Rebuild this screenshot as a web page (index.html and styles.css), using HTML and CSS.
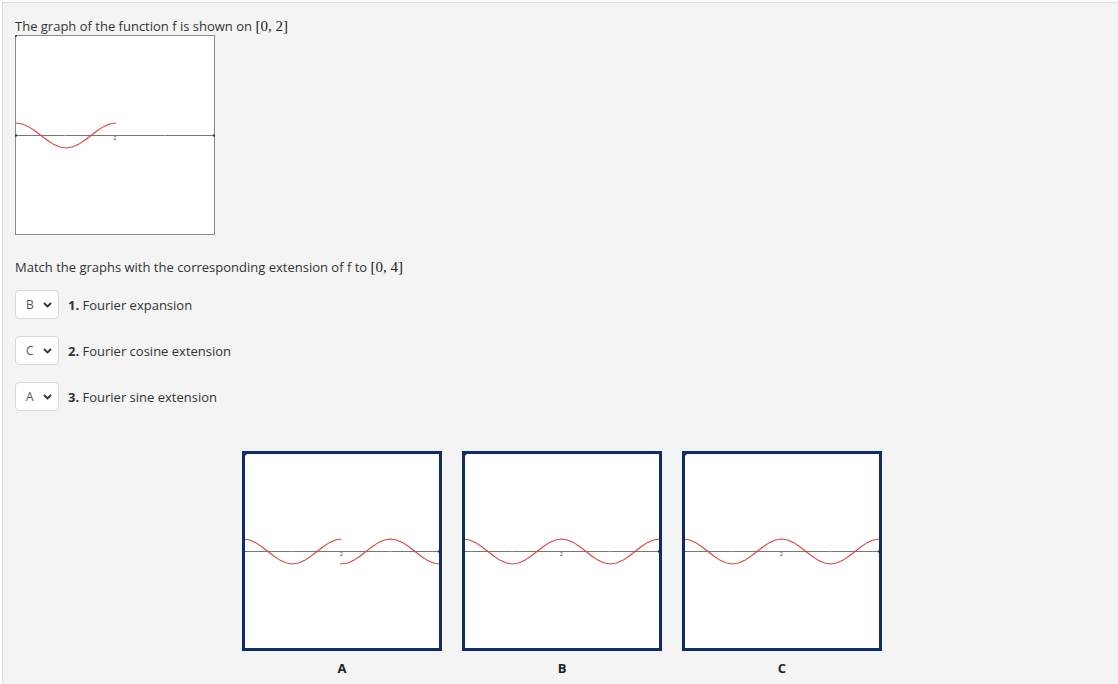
FILE: index.html
```html
<!DOCTYPE html>
<html>
<head>
<meta charset="utf-8">
<link rel="stylesheet" href="styles.css">
</head>
<body>
<div class="panel">
  <p class="line title">The graph of the function f is shown on <span class="math">[0, 2]</span></p>
  <div class="plot1">
    <svg width="200" height="200" viewBox="0 0 200 200">
      <rect x="0.5" y="0.5" width="199" height="199" fill="#fff" stroke="#8a8a8a" stroke-width="1"/>
      <line x1="0" y1="100.5" x2="200" y2="100.5" stroke="#777" stroke-width="1"/>
      <circle cx="1" cy="100.5" r="1.2" fill="#333"/>
      <circle cx="199" cy="100.5" r="1.2" fill="#333"/>
      <circle cx="1" cy="1" r="1" fill="#333"/>
      <circle cx="50" cy="100.5" r="0.7" fill="#aaa"/>
      <circle cx="150" cy="100.5" r="0.7" fill="#aaa"/>
      <text x="100" y="105" font-size="5" fill="#444" text-anchor="middle" font-family="Liberation Sans, sans-serif">2</text>
      <polyline fill="none" stroke="#d9453f" stroke-width="1.1" transform="translate(1,100.5) scale(50,-12.5)" vector-effect="non-scaling-stroke"
        points="0,1 .125,.924 .25,.707 .375,.383 .5,0 .625,-.383 .75,-.707 .875,-.924 1,-1 1.125,-.924 1.25,-.707 1.375,-.383 1.5,0 1.625,.383 1.75,.707 1.875,.924 2,1"/>
    </svg>
  </div>

  <p class="line match">Match the graphs with the corresponding extension of f to <span class="math">[0, 4]</span></p>

  <div class="rows">
    <div class="row">
      <div class="select"><span class="sel-val">B</span><svg class="chev" width="9" height="6" viewBox="0 0 9 6"><path d="M1 1 L4.5 4.5 L8 1" fill="none" stroke="#333" stroke-width="1.8"/></svg></div>
      <span class="label"><b>1.</b> Fourier expansion</span>
    </div>
    <div class="row">
      <div class="select"><span class="sel-val">C</span><svg class="chev" width="9" height="6" viewBox="0 0 9 6"><path d="M1 1 L4.5 4.5 L8 1" fill="none" stroke="#333" stroke-width="1.8"/></svg></div>
      <span class="label"><b>2.</b> Fourier cosine extension</span>
    </div>
    <div class="row">
      <div class="select"><span class="sel-val">A</span><svg class="chev" width="9" height="6" viewBox="0 0 9 6"><path d="M1 1 L4.5 4.5 L8 1" fill="none" stroke="#333" stroke-width="1.8"/></svg></div>
      <span class="label"><b>3.</b> Fourier sine extension</span>
    </div>
  </div>

  <div class="choices">
    <div class="choice">
      <svg class="card" width="200" height="200" viewBox="0 0 200 200">
        <rect x="0" y="0" width="200" height="200" fill="#fff"/>
        <line x1="0" y1="100.5" x2="200" y2="100.5" stroke="#777" stroke-width="1"/>
        <circle cx="2" cy="100.5" r="1.2" fill="#333"/>
        <circle cx="197" cy="100.5" r="1.2" fill="#333"/>
        <circle cx="50" cy="100.5" r="0.7" fill="#aaa"/>
        <circle cx="148" cy="100.5" r="0.7" fill="#aaa"/>
        <text x="99.5" y="105" font-size="5" fill="#444" text-anchor="middle" font-family="Liberation Sans, sans-serif">2</text>
        <polyline fill="none" stroke="#d9453f" stroke-width="1.1" transform="translate(1.5,100.5) scale(49,-12.5)" vector-effect="non-scaling-stroke"
          points="0,1 .125,.924 .25,.707 .375,.383 .5,0 .625,-.383 .75,-.707 .875,-.924 1,-1 1.125,-.924 1.25,-.707 1.375,-.383 1.5,0 1.625,.383 1.75,.707 1.875,.924 2,1"/>
        <polyline fill="none" stroke="#d9453f" stroke-width="1.1" transform="translate(1.5,100.5) scale(49,-12.5)" vector-effect="non-scaling-stroke"
          points="1.97,-1 2.125,-.924 2.25,-.707 2.375,-.383 2.5,0 2.625,.383 2.75,.707 2.875,.924 3,1 3.125,.924 3.25,.707 3.375,.383 3.5,0 3.625,-.383 3.75,-.707 3.875,-.924 4,-1"/>
        <rect x="1.5" y="1.5" width="197" height="197" fill="none" stroke="#102c68" stroke-width="3"/>
        <circle cx="3.5" cy="3.5" r="1" fill="#333"/>
      </svg>
      <div class="cap">A</div>
    </div>
    <div class="choice">
      <svg class="card" width="200" height="200" viewBox="0 0 200 200">
        <rect x="0" y="0" width="200" height="200" fill="#fff"/>
        <line x1="0" y1="100.5" x2="200" y2="100.5" stroke="#777" stroke-width="1"/>
        <circle cx="2" cy="100.5" r="1.2" fill="#333"/>
        <circle cx="197" cy="100.5" r="1.2" fill="#333"/>
        <circle cx="50" cy="100.5" r="0.7" fill="#aaa"/>
        <circle cx="148" cy="100.5" r="0.7" fill="#aaa"/>
        <text x="99.5" y="105" font-size="5" fill="#444" text-anchor="middle" font-family="Liberation Sans, sans-serif">2</text>
        <polyline fill="none" stroke="#d9453f" stroke-width="1.1" transform="translate(1.5,100.5) scale(49,-12.5)" vector-effect="non-scaling-stroke"
          points="0,1 .125,.924 .25,.707 .375,.383 .5,0 .625,-.383 .75,-.707 .875,-.924 1,-1 1.125,-.924 1.25,-.707 1.375,-.383 1.5,0 1.625,.383 1.75,.707 1.875,.924 2,1 2.125,.924 2.25,.707 2.375,.383 2.5,0 2.625,-.383 2.75,-.707 2.875,-.924 3,-1 3.125,-.924 3.25,-.707 3.375,-.383 3.5,0 3.625,.383 3.75,.707 3.875,.924 4,1"/>
        <rect x="1.5" y="1.5" width="197" height="197" fill="none" stroke="#102c68" stroke-width="3"/>
        <circle cx="3.5" cy="3.5" r="1" fill="#333"/>
      </svg>
      <div class="cap">B</div>
    </div>
    <div class="choice">
      <svg class="card" width="200" height="200" viewBox="0 0 200 200">
        <rect x="0" y="0" width="200" height="200" fill="#fff"/>
        <line x1="0" y1="100.5" x2="200" y2="100.5" stroke="#777" stroke-width="1"/>
        <circle cx="2" cy="100.5" r="1.2" fill="#333"/>
        <circle cx="197" cy="100.5" r="1.2" fill="#333"/>
        <circle cx="50" cy="100.5" r="0.7" fill="#aaa"/>
        <circle cx="148" cy="100.5" r="0.7" fill="#aaa"/>
        <text x="99.5" y="105" font-size="5" fill="#444" text-anchor="middle" font-family="Liberation Sans, sans-serif">2</text>
        <polyline fill="none" stroke="#d9453f" stroke-width="1.1" transform="translate(1.5,100.5) scale(49,-12.5)" vector-effect="non-scaling-stroke"
          points="0,1 .125,.924 .25,.707 .375,.383 .5,0 .625,-.383 .75,-.707 .875,-.924 1,-1 1.125,-.924 1.25,-.707 1.375,-.383 1.5,0 1.625,.383 1.75,.707 1.875,.924 2,1 2.125,.924 2.25,.707 2.375,.383 2.5,0 2.625,-.383 2.75,-.707 2.875,-.924 3,-1 3.125,-.924 3.25,-.707 3.375,-.383 3.5,0 3.625,.383 3.75,.707 3.875,.924 4,1"/>
        <rect x="1.5" y="1.5" width="197" height="197" fill="none" stroke="#102c68" stroke-width="3"/>
        <circle cx="3.5" cy="3.5" r="1" fill="#333"/>
      </svg>
      <div class="cap">C</div>
    </div>
  </div>
</div>
</body>
</html>
```

FILE: styles.css
```css
html, body {
  margin: 0;
  padding: 0;
  background: #ffffff;
  overflow: hidden;
}

.panel {
  margin: 2px 0 0 2px;
  width: calc(100vw - 2px);
  height: calc(100vh - 2px);
  box-sizing: border-box;
  background: #f4f4f4;
  border: 1px solid #dedede;
  border-right: none;
  border-bottom: none;
  padding: 14px 0 0 12px;
  font-family: "Open Sans", "Noto Sans", sans-serif;
  font-size: 13px;
  color: #333;
  display: flex;
  flex-direction: column;
  align-items: flex-start;
}

.line {
  margin: 0;
  height: 18px;
  line-height: 18px;
  white-space: nowrap;
}

.math {
  font-family: "Liberation Serif", "DejaVu Serif", serif;
  font-size: 15px;
  line-height: 1;
  color: #222;
}

.plot1 {
  margin-top: 0;
}

.plot1 svg,
.card {
  display: block;
}

.match {
  margin-top: 23px;
}

.rows {
  margin-top: 14px;
  display: flex;
  flex-direction: column;
  gap: 17px;
}

.row {
  display: flex;
  align-items: center;
  gap: 9px;
}

.select {
  box-sizing: border-box;
  width: 44px;
  height: 29px;
  background: #fff;
  border: 1px solid #d8d8d8;
  border-radius: 4px;
  display: flex;
  align-items: center;
  padding-left: 10px;
  gap: 8px;
}

.sel-val {
  color: #555;
  font-size: 12px;
  width: 9px;
}

.chev {
  display: block;
}

.label {
  font-size: 13px;
  color: #333;
}

.label b {
  font-weight: 700;
}

.choices {
  margin-top: 40px;
  margin-left: 227px;
  display: flex;
  gap: 20px;
}

.choice {
  display: flex;
  flex-direction: column;
  align-items: center;
}

.cap {
  margin-top: 8px;
  font-weight: 700;
  font-size: 13px;
  color: #222;
  line-height: 18px;
}
```
